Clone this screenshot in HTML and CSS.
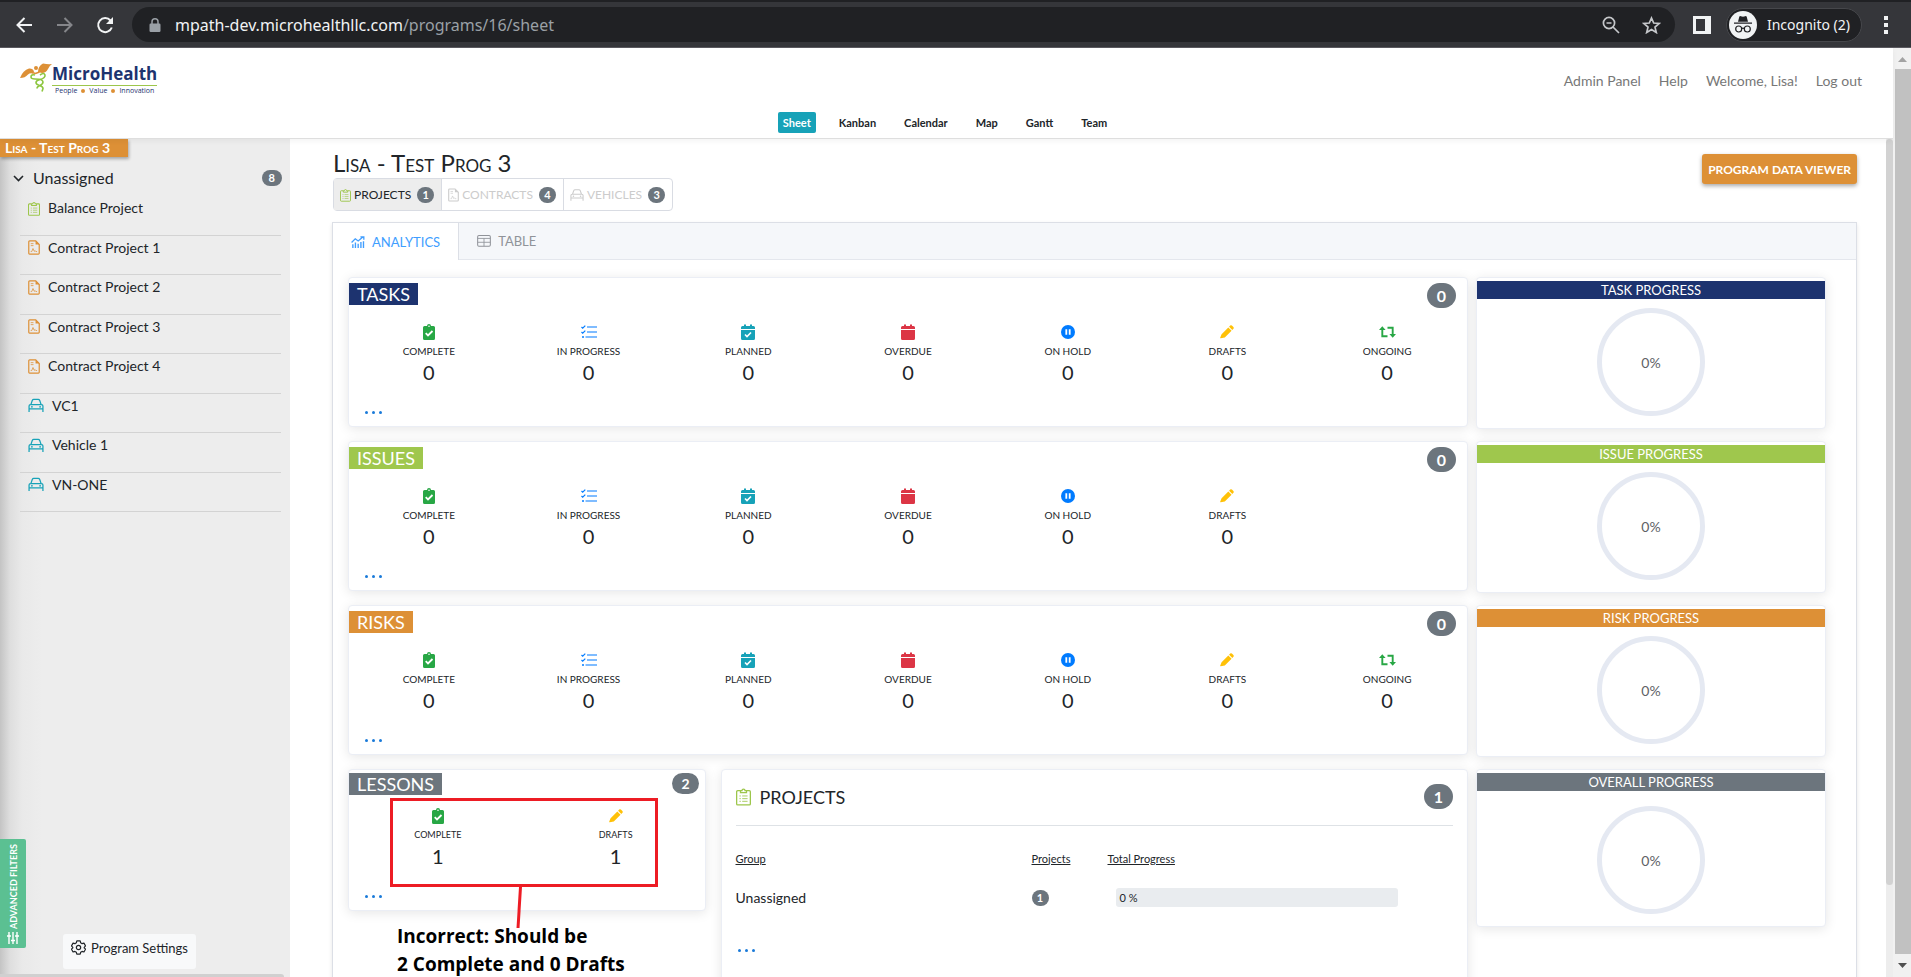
FILE: index.html
```html
<!DOCTYPE html>
<html lang="en">

<head>
    <meta charset="utf-8">
    <title>Lisa - Test Prog 3 - MicroHealth</title>
    <link rel="stylesheet" href="styles.css">
</head>

<body>
    <!-- Icon sprite -->
    <svg class="sprite" aria-hidden="true">
        <symbol id="clipboard" viewBox="0 0 14 17">
            <path fill="none" stroke="currentColor" stroke-width="1.200" d="M4 3.100H1.600q-1 0-1 1v11.300q0 1 1 1h10.800q1 0 1-1V4.100q0-1-1-1H10M4.200 4.900V3h1.400a1.400 1.400 0 0 1 2.800 0h1.400v1.900z" />
            <path stroke="currentColor" stroke-width=".8" d="M3.200 8h1.300M5.800 8h5M3.200 10.500h1.300M5.800 10.500h5M3.200 13h1.300M5.800 13h5" />
        </symbol>
        <symbol id="contract" viewBox="0 0 14 17">
            <path fill="none" stroke="currentColor" stroke-width="1.400" d="M9 .8H1.900q-1 0-1 1v13.400q0 1 1 1h10.200q1 0 1-1V5z" />
            <path fill="currentColor" d="M8.800.9V5h4.200z" />
            <path fill="none" stroke="currentColor" stroke-width=".9" d="M3.200 4h3.200M3.200 6.300h3.200M3.200 13.200h1.200l1.400-3.500 1.500 3.300 1-1 .8 1.200h1.500" />
        </symbol>
        <symbol id="car" viewBox="0 0 18 16">
            <path fill="none" stroke="currentColor" stroke-width="1.400" stroke-linejoin="round" d="M3.200 7l1.600-4.600q.5-1.200 1.700-1.200h5q1.200 0 1.700 1.200L14.800 7M1.200 11.800V8.700Q1.200 7 2.900 7h12.200q1.700 0 1.700 1.700v3.100zM1.200 12v3.400M16.800 12v3.400" />
            <circle cx="4.400" cy="9.500" r="1" fill="currentColor" />
            <circle cx="13.600" cy="9.500" r="1" fill="currentColor" />
        </symbol>
        <symbol id="complete" viewBox="0 0 12 16">
            <path fill="currentColor" d="M1.500 2H4a2 2 0 0 1 4 0h2.500Q12 2 12 3.500v11q0 1.500-1.500 1.500h-9Q0 16 0 14.500v-11Q0 2 1.500 2z" />
            <circle cx="6" cy="2.200" r=".8" fill="#fff" />
            <path fill="none" stroke="#fff" stroke-width="1.800" d="M2.700 9.200l2.300 2.300 4.500-4.500" />
        </symbol>
        <symbol id="progress" viewBox="0 0 16 14">
            <path fill="none" stroke="currentColor" stroke-width="1.200" d="M6 2h10M6 7h10M4.500 12H16" />
            <path fill="none" stroke="currentColor" stroke-width="1.200" d="M.5 2l1.200 1.200L4.300.6M.5 7l1.200 1.200 2.600-2.600" />
            <circle cx="2" cy="12" r="1" fill="currentColor" />
        </symbol>
        <symbol id="planned" viewBox="0 0 14 16">
            <path fill="currentColor" d="M0 5V3.500Q0 2 1.500 2H3V.5h2V2h4V.5h2V2h1.500Q14 2 14 3.500V5zM0 6h14v8.500q0 1.500-1.500 1.500h-11Q0 16 0 14.500z" />
            <path fill="none" stroke="#fff" stroke-width="1.600" d="M4 10.500l2 2 4-4" />
        </symbol>
        <symbol id="overdue" viewBox="0 0 14 16">
            <path fill="currentColor" d="M0 5V3.500Q0 2 1.500 2H3V.5h2V2h4V.5h2V2h1.500Q14 2 14 3.500V5zM0 6h14v8.500q0 1.500-1.500 1.500h-11Q0 16 0 14.500z" />
        </symbol>
        <symbol id="hold" viewBox="0 0 14 14">
            <circle cx="7" cy="7" r="7" fill="currentColor" />
            <path stroke="#fff" stroke-width="1.800" d="M5.300 4.300v5.400M8.700 4.300v5.400" />
        </symbol>
        <symbol id="drafts" viewBox="0 0 16 16">
            <path fill="currentColor" d="M1.800 10.500l7.700-7.700 3.700 3.700-7.700 7.700-4.700 1q-.8 0-.5-.9zM10.400 1.900l1.200-1.200q1-.9 2 0l1.700 1.700q.9 1 0 2l-1.200 1.200z" />
        </symbol>
        <symbol id="ongoing" viewBox="0 0 18 14">
            <path fill="none" stroke="currentColor" stroke-width="2" d="M3.500 4v7.500h5.500M14.500 10V2.500H9" />
            <path fill="currentColor" d="M0 5l3.500-4L7 5zM11 9h7l-3.500 4z" />
        </symbol>
        <symbol id="analytics" viewBox="0 0 16 14">
            <path fill="none" stroke="currentColor" stroke-width="1.500" d="M.5 7.500l4.300-4.300 3.400 2.600L14 1M10.800.9h4v3.500" />
            <path stroke="currentColor" stroke-width="1.600" d="M2 14V9.500M5 14V7.500M8.200 14V9M11.400 14V7M14.400 14V6" />
        </symbol>
        <symbol id="table" viewBox="0 0 16 14">
            <rect x=".6" y=".6" width="14.800" height="12.600" rx="1.500" fill="none" stroke="currentColor" stroke-width="1.200" />
            <path stroke="currentColor" d="M.6 4h14.800M.6 8.500h14.800M8 4v9" />
        </symbol>
        <symbol id="gear" viewBox="0 0 16 16">
            <path fill="none" stroke="currentColor" stroke-width="1.300" stroke-linejoin="round" d="M6.200 1h3.600l.5 2 1.500.9 2-.6 1.700 3-1.400 1.500v.6l1.400 1.400-1.700 3-2-.6-1.500.9-.5 2H6.200l-.5-2-1.500-.9-2 .6-1.700-3 1.400-1.400v-.6L.5 6.300l1.700-3 2 .6L5.700 3z" />
            <circle cx="8" cy="8" r="2.300" fill="none" stroke="currentColor" stroke-width="1.300" />
        </symbol>
        <symbol id="sliders" viewBox="0 0 12 12">
            <path stroke="currentColor" stroke-width="1.400" d="M2 0v12M6 0v12M10 0v12M0 8h4M4 3.500h4M8 8h4" />
        </symbol>
    </svg>

    <!-- Browser toolbar -->
    <div class="toolbar">
        <button class="tool" aria-label="Back"><svg width="17" height="16" viewBox="0 0 17 16"><path d="M16 8H2M8.500 1L1.500 8l7 7" /></svg></button>
        <button class="tool tool-off" aria-label="Forward"><svg width="17" height="16" viewBox="0 0 17 16"><path d="M1 8h14M8.500 1l7 7-7 7" /></svg></button>
        <button class="tool" aria-label="Reload"><svg width="18" height="18" viewBox="0 0 18 18"><path d="M15.800 11.500A7 7 0 1 1 14.500 4.500" /><path class="solid" d="M17 1v7h-7z" /></svg></button>
        <div class="address">
            <svg width="12" height="14" viewBox="0 0 12 14"><rect class="lock" x=".5" y="5.500" width="11" height="8.500" rx="1.200" /><path class="shackle" d="M3 6V3.800a3 3 0 0 1 6 0V6" /></svg>
            <span class="url">mpath-dev.microhealthllc.com<span class="path">/programs/16/sheet</span></span>
            <button class="tool zoom" aria-label="Zoom"><svg width="18" height="18" viewBox="0 0 18 18"><circle cx="7" cy="7" r="5.600" /><path d="M11 11l6 6M4.500 7h5" /></svg></button>
            <button class="tool" aria-label="Bookmark"><svg width="19" height="18" viewBox="0 0 19 18"><path d="M9.500 2l2.200 5 5.500.5-4.200 3.600 1.300 5.400-4.800-2.900-4.800 2.900L6 11.100 1.800 7.500 7.300 7z" /></svg></button>
        </div>
        <button class="tool" aria-label="Side panel"><svg width="18" height="18" viewBox="0 0 18 18"><path class="solid" fill-rule="evenodd" d="M0 0h18v18H0zM3 3v12h9V3z" /></svg></button>
        <button class="incognito">
            <svg width="28" height="28" viewBox="0 0 28 28">
                <circle cx="14" cy="14" r="14" fill="#f1f3f4" />
                <path fill="#202124" d="M5 11.500h18v1.300H5zM9 10.800l1.300-5q.4-1 1.500-.6l2.200.6 2.200-.6q1.100-.4 1.500.6l1.300 5z" />
                <path fill="none" stroke="#202124" stroke-width="1.200" d="M12.700 17.500q1.300-.8 2.600 0" />
                <circle cx="9.700" cy="18" r="3" fill="none" stroke="#202124" stroke-width="1.200" />
                <circle cx="18.300" cy="18" r="3" fill="none" stroke="#202124" stroke-width="1.200" />
            </svg>
            Incognito (2)
        </button>
        <button class="tool" aria-label="Menu"><svg width="4" height="18" viewBox="0 0 4 18"><path class="solid" d="M0 0h4v4H0zM0 7h4v4H0zM0 14h4v4H0z" /></svg></button>
    </div>

    <div class="window">
        <div class="app">
            <header class="site-header">
                <div class="brand-row">
                    <a class="logo" href="#">
                        <svg width="32" height="30" viewBox="0 0 32 30">
                            <path fill="#dd9036" d="M0 15Q3 7 9 5.500q4-.3 5 3l-1 2q-3-1-5 1Q5 15 0 15zM18 9q0-6 5-8.500 5 1 9 .5-3 2-4 5-2 4-6 4z" />
                            <circle cx="16" cy="5" r="2" fill="#dd9036" />
                            <path fill="none" stroke="#dd9036" stroke-width="1.600" d="M12 9.500l3.500 1 4-1.500" />
                            <path fill="none" stroke="#8dc63f" stroke-width="1.600" d="M15 12q-4-1-4 2 0 2 4 2 8 0 8 3 0 2-3 3.500-3 1-3 3M20 12q4-3 5 0 .5 3-5 4.500-4 1-4 3t3.500 3 3.500 3l-1 3" />
                        </svg>
                        <span class="logo-words">
                            <span class="logo-name">MicroHealth</span>
                            <span class="logo-tag">People <i></i> Value <i></i> Innovation</span>
                        </span>
                    </a>
                    <nav class="user-links">
                        <a href="#">Admin Panel</a>
                        <a href="#">Help</a>
                        <a href="#">Welcome, Lisa!</a>
                        <a href="#">Log out</a>
                    </nav>
                </div>
                <nav class="view-tabs">
                    <a class="active" href="#">Sheet</a>
                    <a href="#">Kanban</a>
                    <a href="#">Calendar</a>
                    <a href="#">Map</a>
                    <a href="#">Gantt</a>
                    <a href="#">Team</a>
                </nav>
            </header>

            <div class="workspace">
                <aside class="sidebar">
                    <a class="program-name" href="#">Lisa - Test Prog 3</a>
                    <div class="group-head">
                        <svg width="11" height="7" viewBox="0 0 11 7"><path d="M1 1l4.500 4.500L10 1" /></svg>
                        <span>Unassigned</span>
                        <span class="badge small">8</span>
                    </div>
                    <ul class="project-list">
                        <li><a href="#"><svg class="green" width="12" height="15"><use href="#clipboard" /></svg>Balance Project</a></li>
                        <li><a href="#"><svg class="orange" width="12" height="15"><use href="#contract" /></svg>Contract Project 1</a></li>
                        <li><a href="#"><svg class="orange" width="12" height="15"><use href="#contract" /></svg>Contract Project 2</a></li>
                        <li><a href="#"><svg class="orange" width="12" height="15"><use href="#contract" /></svg>Contract Project 3</a></li>
                        <li><a href="#"><svg class="orange" width="12" height="15"><use href="#contract" /></svg>Contract Project 4</a></li>
                        <li><a href="#"><svg class="teal" width="16" height="15"><use href="#car" /></svg>VC1</a></li>
                        <li><a href="#"><svg class="teal" width="16" height="15"><use href="#car" /></svg>Vehicle 1</a></li>
                        <li><a href="#"><svg class="teal" width="16" height="15"><use href="#car" /></svg>VN-ONE</a></li>
                    </ul>
                    <button class="settings"><svg width="15" height="15"><use href="#gear" /></svg>Program Settings</button>
                    <div class="side-scroll"></div>
                    <button class="filters"><svg width="12" height="12"><use href="#sliders" /></svg>ADVANCED FILTERS</button>
                </aside>

                <main class="main">
                    <div class="page-head">
                        <div>
                            <h1>Lisa - Test Prog 3</h1>
                            <div class="type-group">
                                <button class="active"><svg class="green" width="11" height="14"><use href="#clipboard" /></svg>PROJECTS<span class="badge small">1</span></button>
                                <button><svg width="11" height="14"><use href="#contract" /></svg>CONTRACTS<span class="badge small">4</span></button>
                                <button><svg width="14" height="14"><use href="#car" /></svg>VEHICLES<span class="badge small">3</span></button>
                            </div>
                        </div>
                        <button class="data-viewer">PROGRAM DATA VIEWER</button>
                    </div>

                    <section class="panel">
                        <div class="panel-tabs">
                            <button class="active"><svg width="14" height="12"><use href="#analytics" /></svg>ANALYTICS</button>
                            <button><svg width="14" height="12"><use href="#table" /></svg>TABLE</button>
                        </div>

                        <div class="board">
                            <div class="stack">
                                <article class="card stat-card">
                                    <div class="card-head"><h2 class="bg-navy">TASKS</h2><span class="badge large">0</span></div>
                                    <div class="stats">
                                        <div class="stat"><svg class="c-green" width="16" height="15"><use href="#complete" /></svg><span>COMPLETE</span><b>0</b></div>
                                        <div class="stat"><svg class="c-blue" width="16" height="15"><use href="#progress" /></svg><span>IN PROGRESS</span><b>0</b></div>
                                        <div class="stat"><svg class="teal" width="16" height="15"><use href="#planned" /></svg><span>PLANNED</span><b>0</b></div>
                                        <div class="stat"><svg class="c-red" width="16" height="15"><use href="#overdue" /></svg><span>OVERDUE</span><b>0</b></div>
                                        <div class="stat"><svg class="c-blue" width="14" height="14"><use href="#hold" /></svg><span>ON HOLD</span><b>0</b></div>
                                        <div class="stat"><svg class="c-yellow" width="14" height="14"><use href="#drafts" /></svg><span>DRAFTS</span><b>0</b></div>
                                        <div class="stat"><svg class="c-green" width="17" height="13"><use href="#ongoing" /></svg><span>ONGOING</span><b>0</b></div>
                                    </div>
                                    <button class="more" aria-label="More"><i></i><i></i><i></i></button>
                                </article>

                                <article class="card stat-card">
                                    <div class="card-head"><h2 class="bg-green">ISSUES</h2><span class="badge large">0</span></div>
                                    <div class="stats">
                                        <div class="stat"><svg class="c-green" width="16" height="15"><use href="#complete" /></svg><span>COMPLETE</span><b>0</b></div>
                                        <div class="stat"><svg class="c-blue" width="16" height="15"><use href="#progress" /></svg><span>IN PROGRESS</span><b>0</b></div>
                                        <div class="stat"><svg class="teal" width="16" height="15"><use href="#planned" /></svg><span>PLANNED</span><b>0</b></div>
                                        <div class="stat"><svg class="c-red" width="16" height="15"><use href="#overdue" /></svg><span>OVERDUE</span><b>0</b></div>
                                        <div class="stat"><svg class="c-blue" width="14" height="14"><use href="#hold" /></svg><span>ON HOLD</span><b>0</b></div>
                                        <div class="stat"><svg class="c-yellow" width="14" height="14"><use href="#drafts" /></svg><span>DRAFTS</span><b>0</b></div>
                                    </div>
                                    <button class="more" aria-label="More"><i></i><i></i><i></i></button>
                                </article>

                                <article class="card stat-card">
                                    <div class="card-head"><h2 class="bg-orange">RISKS</h2><span class="badge large">0</span></div>
                                    <div class="stats">
                                        <div class="stat"><svg class="c-green" width="16" height="15"><use href="#complete" /></svg><span>COMPLETE</span><b>0</b></div>
                                        <div class="stat"><svg class="c-blue" width="16" height="15"><use href="#progress" /></svg><span>IN PROGRESS</span><b>0</b></div>
                                        <div class="stat"><svg class="teal" width="16" height="15"><use href="#planned" /></svg><span>PLANNED</span><b>0</b></div>
                                        <div class="stat"><svg class="c-red" width="16" height="15"><use href="#overdue" /></svg><span>OVERDUE</span><b>0</b></div>
                                        <div class="stat"><svg class="c-blue" width="14" height="14"><use href="#hold" /></svg><span>ON HOLD</span><b>0</b></div>
                                        <div class="stat"><svg class="c-yellow" width="14" height="14"><use href="#drafts" /></svg><span>DRAFTS</span><b>0</b></div>
                                        <div class="stat"><svg class="c-green" width="17" height="13"><use href="#ongoing" /></svg><span>ONGOING</span><b>0</b></div>
                                    </div>
                                    <button class="more" aria-label="More"><i></i><i></i><i></i></button>
                                </article>

                                <div class="bottom-row">
                                    <article class="card stat-card lessons">
                                        <div class="card-head"><h2 class="bg-gray">LESSONS</h2><span class="badge medium">2</span></div>
                                        <div class="stats">
                                            <div class="stat"><svg class="c-green" width="16" height="15"><use href="#complete" /></svg><span>COMPLETE</span><b>1</b></div>
                                            <div class="stat"><svg class="c-yellow" width="14" height="14"><use href="#drafts" /></svg><span>DRAFTS</span><b>1</b></div>
                                        </div>
                                        <button class="more" aria-label="More"><i></i><i></i><i></i></button>

                                        <!-- Review note pinned over the card -->
                                        <div class="note">
                                            <div class="note-box"></div>
                                            <svg width="6" height="41" viewBox="0 0 6 41"><path d="M4.500 0L2 41" /></svg>
                                            <p>Incorrect: Should be<br>2 Complete and 0 Drafts</p>
                                        </div>
                                    </article>

                                    <article class="card projects">
                                        <div class="projects-head">
                                            <svg class="green" width="15" height="19"><use href="#clipboard" /></svg>
                                            <h2>PROJECTS</h2>
                                            <span class="badge large">1</span>
                                        </div>
                                        <table>
                                            <thead>
                                                <tr><th class="col-group">Group</th><th class="col-count">Projects</th><th>Total Progress</th></tr>
                                            </thead>
                                            <tbody>
                                                <tr><td>Unassigned</td><td><span class="badge small">1</span></td><td><div class="bar">0 %</div></td></tr>
                                            </tbody>
                                        </table>
                                        <button class="more" aria-label="More"><i></i><i></i><i></i></button>
                                    </article>
                                </div>
                            </div>

                            <div class="stack rings">
                                <article class="card"><h3 class="bg-navy">TASK PROGRESS</h3><div class="ring">0%</div></article>
                                <article class="card"><h3 class="bg-green">ISSUE PROGRESS</h3><div class="ring">0%</div></article>
                                <article class="card"><h3 class="bg-orange">RISK PROGRESS</h3><div class="ring">0%</div></article>
                                <article class="card overall"><h3 class="bg-gray">OVERALL PROGRESS</h3><div class="ring">0%</div></article>
                            </div>
                        </div>
                    </section>
                </main>
                <div class="inner-scroll"><div class="inner-thumb"></div></div>
            </div>
        </div>

        <div class="outer-scroll">
            <svg width="9" height="5" viewBox="0 0 9 5"><path fill="#a3a3a3" d="M0 5l4.500-5L9 5z" /></svg>
            <div class="outer-thumb"></div>
            <svg width="9" height="5" viewBox="0 0 9 5"><path fill="#505050" d="M0 0l4.500 5L9 0z" /></svg>
        </div>
    </div>
</body>

</html>
```
FILE: styles.css
```css
* {
    box-sizing: border-box;
}

body {
    margin: 0;
    height: 100vh;
    display: flex;
    flex-direction: column;
    overflow: hidden;
    background: #fff;
    color: #212529;
    font-family: Lato, "Liberation Sans", sans-serif;
    font-size: 14px;
}

a {
    color: inherit;
    text-decoration: none;
}

button {
    font: inherit;
    color: inherit;
    border: none;
    background: none;
    padding: 0;
    cursor: pointer;
}

h1,
h2,
h3,
p,
ul {
    margin: 0;
    padding: 0;
    font-weight: 400;
}

svg {
    flex: none;
}

.sprite {
    position: absolute;
    width: 0;
    height: 0;
}

/* colours */
.green { color: #9dc64b; }
.orange { color: #dd9036; }
.teal { color: #17a2b8; }
.c-green { color: #28a745; }
.c-blue { color: #007bff; }
.c-red { color: #dc3545; }
.c-yellow { color: #ffc107; }
.bg-navy { background: #1d336f; }
.bg-green { background: #9fc74d; }
.bg-orange { background: #dd9036; }
.bg-gray { background: #6c757d; }

/* browser toolbar */
.toolbar {
    flex: none;
    display: flex;
    align-items: center;
    height: 48px;
    padding: 0 23px 0 16px;
    border-top: 2px solid #202124;
    border-bottom: 1px solid #5b5a60;
    background: #35363a;
    color: #f1f3f4;
    font-family: "Noto Sans", "Open Sans", sans-serif;
}

.tool {
    display: flex;
    margin-right: 23px;
}

.tool:last-child {
    margin-right: 0;
}

.tool path,
.tool circle {
    fill: none;
    stroke: #f1f3f4;
    stroke-width: 2;
}

.tool .solid {
    fill: #f1f3f4;
    stroke: none;
}

.tool-off path {
    stroke: #85868a;
}

.address {
    flex: 1;
    display: flex;
    align-items: center;
    height: 35px;
    margin-right: 18px;
    padding: 0 14px 0 17px;
    border-radius: 18px;
    background: #202124;
    font-size: 16px;
}

.tool + .address {
    margin-left: -5px;
}

.address .tool {
    margin-right: 0;
}

.address .tool path,
.address .tool circle {
    stroke: #c6c8cb;
    stroke-width: 1.700;
}

.address .zoom {
    margin-right: 22px;
}

.lock {
    fill: #9aa0a6;
}

.shackle {
    fill: none;
    stroke: #9aa0a6;
    stroke-width: 1.500;
}

.url {
    flex: 1;
    margin-left: 14px;
}

.path {
    color: #9aa0a6;
}

.address + .tool {
    margin-right: 15px;
}

.incognito {
    display: flex;
    align-items: center;
    gap: 10px;
    height: 34px;
    margin-right: 22px;
    padding: 0 11px 0 2px;
    border: 1px solid #46474b;
    border-radius: 17px;
    background: #202124;
    font-size: 14px;
}

/* page frame */
.window {
    flex: 1;
    min-height: 0;
    display: flex;
}

.app {
    flex: 1;
    min-width: 0;
    display: flex;
    flex-direction: column;
}

.outer-scroll {
    width: 18px;
    display: flex;
    flex-direction: column;
    align-items: center;
    justify-content: space-between;
    padding: 9px 0;
    background: #f1f1f1;
}

.outer-thumb {
    flex: 1;
    align-self: stretch;
    margin: 7px 0 9px 2px;
    background: #c1c1c1;
}

/* header */
.site-header {
    flex: none;
    position: relative;
    z-index: 1;
    height: 91px;
    display: flex;
    flex-direction: column;
    justify-content: space-between;
    padding: 15px 31px 5px 20px;
    border-bottom: 1px solid #dedede;
    background: #fff;
    box-shadow: 0 2px 6px rgba(0, 0, 0, 0.050);
}

.brand-row {
    display: flex;
    justify-content: space-between;
}

.logo {
    display: flex;
}

.logo-words {
    display: flex;
    flex-direction: column;
    color: #1d336f;
    font-family: "Open Sans", "Noto Sans", sans-serif;
}

.logo-name {
    font-size: 17px;
    font-weight: 700;
    line-height: 22px;
    border-bottom: 1px solid #9dc64b;
}

.logo-tag {
    font-size: 7px;
    line-height: 9px;
    padding-left: 3px;
    display: flex;
    align-items: center;
    gap: 4px;
}

.logo-tag i {
    width: 4px;
    height: 4px;
    border-radius: 2px;
    background: #dd9036;
}

.user-links {
    display: flex;
    gap: 18px;
    padding-top: 9px;
    color: #777;
    line-height: 18px;
}

.view-tabs {
    display: flex;
    justify-content: center;
    gap: 18px;
    margin-left: 8px;
    font-size: 11px;
    font-weight: 700;
    line-height: 21px;
}

.view-tabs a {
    padding: 0 5px;
    border-radius: 2px;
}

.view-tabs .active {
    background: #17a2b8;
    color: #fff;
}

.workspace {
    flex: 1;
    min-height: 0;
    display: flex;
}

.badge {
    display: inline-block;
    border-radius: 13px;
    background: #6c757d;
    color: #fff;
    font-weight: 700;
    text-align: center;
}

.badge.small {
    min-width: 17px;
    padding: 0 5px;
    font-size: 11px;
    line-height: 16px;
}

.badge.medium {
    padding: 0 9px;
    font-size: 14px;
    line-height: 21px;
}

.badge.large {
    padding: 0 10px;
    font-size: 16px;
    line-height: 25px;
}

/* sidebar */
.sidebar {
    position: relative;
    flex: none;
    width: 290px;
    display: flex;
    flex-direction: column;
    align-items: flex-start;
    background: linear-gradient(to right, #c4c4c4, #dedede 10px, #e9e9e9 22px, #ededed 42px);
}

.program-name {
    width: 128px;
    padding-left: 5px;
    background: #dd9036;
    color: #fff;
    font-size: 14px;
    font-weight: 700;
    font-variant: small-caps;
    line-height: 18px;
    white-space: nowrap;
    box-shadow: 1px 2px 3px rgba(0, 0, 0, 0.300);
}

.group-head {
    align-self: stretch;
    display: flex;
    align-items: center;
    gap: 9px;
    padding: 9px 8px 0 13px;
    font-size: 16px;
    line-height: 24px;
}

.group-head path {
    fill: none;
    stroke: #212529;
    stroke-width: 1.600;
}

.group-head .badge {
    margin-left: auto;
    padding: 0 7px;
}

.project-list {
    align-self: stretch;
    display: grid;
    grid-auto-rows: 1fr;
    height: 316px;
    margin: 6px 9px 0 20px;
    list-style: none;
}

.project-list li {
    border-bottom: 1px solid #d3d3d3;
}

.project-list a {
    display: flex;
    align-items: center;
    gap: 8px;
    padding-left: 8px;
    line-height: 24px;
}

.settings {
    display: flex;
    gap: 5px;
    height: 35px;
    margin: auto 0 5px 63px;
    padding: 6px 8px;
    border-radius: 3px;
    background: #f8f9fa;
    font-size: 13px;
    line-height: 17px;
}

.side-scroll {
    width: 284px;
    height: 3px;
    border-radius: 0 3px 0 0;
    background: #d0d0d0;
}

.filters {
    position: absolute;
    left: 0;
    bottom: 29px;
    display: flex;
    align-items: center;
    gap: 3px;
    width: 26px;
    height: 109px;
    padding: 4px 6px;
    border-radius: 2px 0 0 2px;
    background: #5bc092;
    color: #fff;
    font-size: 9px;
    font-weight: 700;
    writing-mode: vertical-rl;
    transform: rotate(180deg);
    white-space: nowrap;
}

/* main column */
.main {
    flex: 1;
    min-width: 0;
    display: flex;
    flex-direction: column;
    padding: 8px 29px 0 42px;
    overflow: hidden;
}

.page-head {
    display: flex;
    justify-content: space-between;
    align-items: flex-start;
}

h1 {
    font-size: 24px;
    font-variant: small-caps;
    line-height: 31px;
    padding-left: 1px;
}

.type-group {
    display: inline-flex;
    margin-left: 1px;
    border: 1px solid #d9dce3;
    border-radius: 4px;
    font-size: 12px;
}

.type-group button {
    display: flex;
    align-items: center;
    gap: 3px;
    height: 31px;
    padding: 0 7px 0 6px;
    color: #ccc;
}

.type-group button + button {
    border-left: 1px solid #d9dce3;
}

.type-group .active {
    background: #ededed;
    color: #212529;
}

.type-group .badge {
    margin-left: 3px;
}

.data-viewer {
    height: 30px;
    margin-top: 7px;
    padding: 0 6px;
    border-radius: 3px;
    background: #dd9036;
    color: #fff;
    font-size: 12px;
    font-weight: 700;
    box-shadow: 0 2px 4px rgba(0, 0, 0, 0.350);
}

.panel {
    flex: 1;
    margin-top: 11px;
    border: 1px solid #dcdfe6;
    border-bottom: none;
    box-shadow: 0 2px 4px rgba(0, 0, 0, 0.100);
}

.panel-tabs {
    display: flex;
    height: 37px;
    border-bottom: 1px solid #e4e7ed;
    background: #f5f7fa;
    color: #909399;
    font-size: 13px;
}

.panel-tabs button {
    display: flex;
    align-items: center;
    gap: 7px;
    padding: 0 18px;
}

.panel-tabs .active {
    height: 37px;
    border-right: 1px solid #dcdfe6;
    background: #fff;
    color: #409eff;
}

.board {
    display: grid;
    grid-template-columns: 16fr 5fr;
    gap: 8px;
    align-items: start;
    padding: 17px 30px 0 15px;
}

.stack {
    display: flex;
    flex-direction: column;
    gap: 14px;
}

.card {
    border: 1px solid #ebeef5;
    border-radius: 4px;
    background: #fff;
    box-shadow: 0 2px 12px rgba(0, 0, 0, 0.100);
}

.card-head {
    display: flex;
    justify-content: space-between;
    align-items: flex-start;
    height: 46px;
    padding: 5px 11px 0 0;
}

.card-head h2 {
    padding: 0 8px;
    color: #fff;
    font-size: 18px;
    line-height: 22px;
}

.stats {
    display: grid;
    grid-template-columns: repeat(7, 1fr);
}

.stat {
    display: flex;
    flex-direction: column;
    align-items: center;
}

.stat svg {
    height: 16px;
}

.stat span {
    margin-top: 3px;
    font-size: 10px;
    line-height: 16px;
}

.stat b {
    font-size: 20px;
    font-weight: 400;
    line-height: 26px;
}

.more {
    display: flex;
    gap: 4px;
    margin: 26px 0 12px 16px;
}

.more i {
    width: 3px;
    height: 3px;
    border-radius: 2px;
    background: #1a7ad9;
}

.bottom-row {
    display: grid;
    grid-template-columns: 11fr 23fr;
    gap: 15px;
    align-items: start;
}

.lessons {
    position: relative;
}

.lessons .card-head {
    height: 38px;
    padding: 3px 6px 0 0;
}

.lessons .stats {
    grid-template-columns: repeat(2, 1fr);
}

.lessons .stat span {
    font-size: 9px;
}

/* review note */
.note {
    position: absolute;
    top: 28px;
    left: 41px;
    width: 268px;
    color: #000;
}

.note-box {
    height: 89px;
    border: 3px solid #ed1c24;
}

.note svg {
    display: block;
    margin-left: 126px;
}

.note path {
    stroke: #ed1c24;
    stroke-width: 3;
}

.note p {
    padding-left: 7px;
    font-family: "Open Sans", "Noto Sans", sans-serif;
    font-size: 19px;
    font-weight: 700;
    line-height: 28px;
    margin-top: -6px;
    white-space: nowrap;
}

.projects {
    height: 240px;
    padding: 14px 14px 0;
}

.projects-head {
    display: flex;
    align-items: center;
    gap: 9px;
    height: 42px;
    padding-bottom: 16px;
    border-bottom: 1px solid #dee2e6;
}

.projects-head h2 {
    font-size: 18px;
}

.projects-head .badge {
    margin-left: auto;
}

table {
    width: 100%;
    border-collapse: collapse;
    table-layout: fixed;
    margin-top: 19px;
}

th,
td {
    padding: 0;
    text-align: left;
}

th {
    height: 26px;
    font-size: 11px;
    font-weight: 400;
    text-decoration: underline;
}

td {
    height: 52px;
}

.col-group {
    width: 296px;
}

.col-count {
    width: 76px;
}

.bar {
    height: 19px;
    margin: 0 55px 0 8px;
    padding-left: 4px;
    border-radius: 3px;
    background: #e9ecef;
    font-size: 11px;
    line-height: 19px;
}

.projects .more {
    margin-left: 2px;
}

/* progress rings */
.rings {
    gap: 12px;
}

.rings .card {
    height: 152px;
    padding-top: 3px;
}

.rings h3 {
    color: #fff;
    font-size: 13px;
    line-height: 18px;
    text-align: center;
}

.ring {
    display: flex;
    align-items: center;
    justify-content: center;
    width: 108px;
    height: 108px;
    margin: 9px auto 0;
    border: 5px solid #e5e9f2;
    border-radius: 50%;
    color: #606266;
}

.rings .overall {
    height: 158px;
}

.overall .ring {
    margin-top: 15px;
}

.inner-scroll {
    flex: none;
    width: 7px;
    background: #ededed;
}

.inner-thumb {
    height: 89%;
    border-radius: 4px;
    background: #d2d2d2;
}
```
